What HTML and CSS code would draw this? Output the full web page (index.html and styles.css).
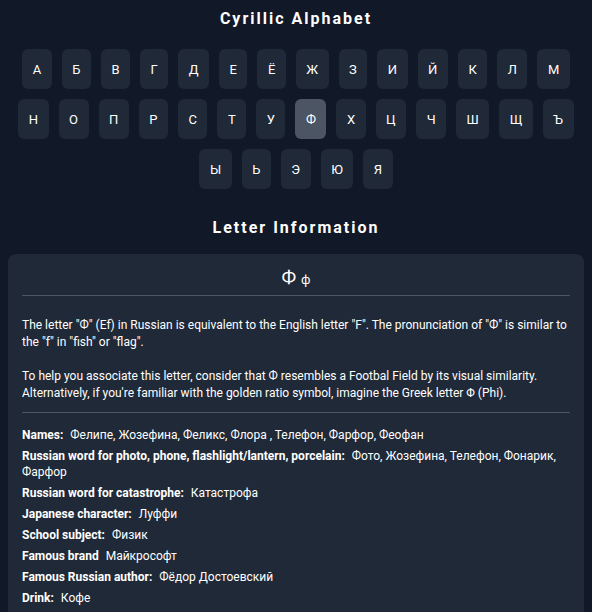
FILE: index.html
```html
<!DOCTYPE html>
<html lang="ru">

<head>
  <meta charset="UTF-8" />
  <meta name="viewport" content="width=device-width, initial-scale=1.0" />
  <title>Cyrillic Alphabet</title>
  <link rel="stylesheet" href="styles.css">
</head>

<body>
  <h1 class="page-title">Cyrillic Alphabet</h1>

  <div class="alphabet">
    <button class="letter-btn">А</button>
    <button class="letter-btn">Б</button>
    <button class="letter-btn">В</button>
    <button class="letter-btn">Г</button>
    <button class="letter-btn">Д</button>
    <button class="letter-btn">Е</button>
    <button class="letter-btn">Ё</button>
    <button class="letter-btn">Ж</button>
    <button class="letter-btn">З</button>
    <button class="letter-btn">И</button>
    <button class="letter-btn">Й</button>
    <button class="letter-btn">К</button>
    <button class="letter-btn">Л</button>
    <button class="letter-btn">М</button>
    <button class="letter-btn">Н</button>
    <button class="letter-btn">О</button>
    <button class="letter-btn">П</button>
    <button class="letter-btn">Р</button>
    <button class="letter-btn">С</button>
    <button class="letter-btn">Т</button>
    <button class="letter-btn">У</button>
    <button class="letter-btn active">Ф</button>
    <button class="letter-btn">Х</button>
    <button class="letter-btn">Ц</button>
    <button class="letter-btn">Ч</button>
    <button class="letter-btn">Ш</button>
    <button class="letter-btn">Щ</button>
    <button class="letter-btn">Ъ</button>
    <button class="letter-btn">Ы</button>
    <button class="letter-btn">Ь</button>
    <button class="letter-btn">Э</button>
    <button class="letter-btn">Ю</button>
    <button class="letter-btn">Я</button>
  </div>

  <h2 class="section-title">Letter Information</h2>

  <div class="info-card">
    <div class="letter-title">Ф <span class="lower">ф</span></div>
    <hr>
    <p class="description">
      The letter "Ф" (Ef) in Russian is equivalent to the English letter "F". The pronunciation of "Ф" is similar to
      the "f" in "fish" or "flag".<br><br>
      To help you associate this letter, consider that Ф resembles a Footbal Field by its visual similarity.
      Alternatively, if you're familiar with the golden ratio symbol, imagine the Greek letter Φ (Phi).
    </p>
    <hr>
    <div class="facts">
      <div class="fact"><b>Names:</b> Фелипе, Жозефина, Феликс, Флора , Телефон, Фарфор, Феофан</div>
      <div class="fact"><b>Russian word for photo, phone, flashlight/lantern, porcelain:</b> Фото, Жозефина, Телефон, Фонарик, Фарфор</div>
      <div class="fact"><b>Russian word for catastrophe:</b> Катастрофа</div>
      <div class="fact"><b>Japanese character:</b> Луффи</div>
      <div class="fact"><b>School subject:</b> Физик</div>
      <div class="fact"><b>Famous brand</b> Майкрософт</div>
      <div class="fact"><b>Famous Russian author:</b> Фёдор Достоевский</div>
      <div class="fact"><b>Drink:</b> Кофе</div>
    </div>
  </div>
</body>
</html>
```

FILE: styles.css
```css
* {
  box-sizing: border-box;
  margin: 0;
  padding: 0;
}

body {
  background-color: #111827;
  color: #fff;
  font-family: Roboto, sans-serif;
  padding: 0 8px 20px;
}

.page-title,
.section-title {
  text-align: center;
  font-size: 16px;
  font-weight: bold;
  letter-spacing: 2px;
  line-height: 22px;
}

.page-title {
  margin-top: 8px;
  margin-bottom: 19px;
}

.alphabet {
  display: flex;
  flex-wrap: wrap;
  justify-content: center;
  gap: 10px;
}

.letter-btn {
  height: 40px;
  padding: 0 10.5px;
  background-color: #1f2937;
  color: #fff;
  border: none;
  border-radius: 6px;
  font-family: inherit;
  font-size: 13px;
  cursor: pointer;
}

.letter-btn:hover {
  background-color: #374151;
}

.letter-btn.active {
  background-color: #4b5563;
}

.section-title {
  margin-top: 28px;
  margin-bottom: 15px;
}

.info-card {
  background-color: #1f2937;
  border-radius: 8px;
  padding: 11px 14px 12px;
}

.letter-title {
  text-align: center;
  font-size: 19px;
  line-height: 26px;
  margin-bottom: 2px;
}

.letter-title .lower {
  font-size: 13px;
}

hr {
  border: none;
  border-top: 1px solid #4b5563;
}

.description {
  font-size: 12px;
  line-height: 17px;
  margin: 21px 0 10px;
}

.facts {
  margin-top: 14px;
}

.fact {
  font-size: 12px;
  line-height: 16px;
  margin-bottom: 5px;
}

.fact b {
  margin-right: 4px;
}
```
